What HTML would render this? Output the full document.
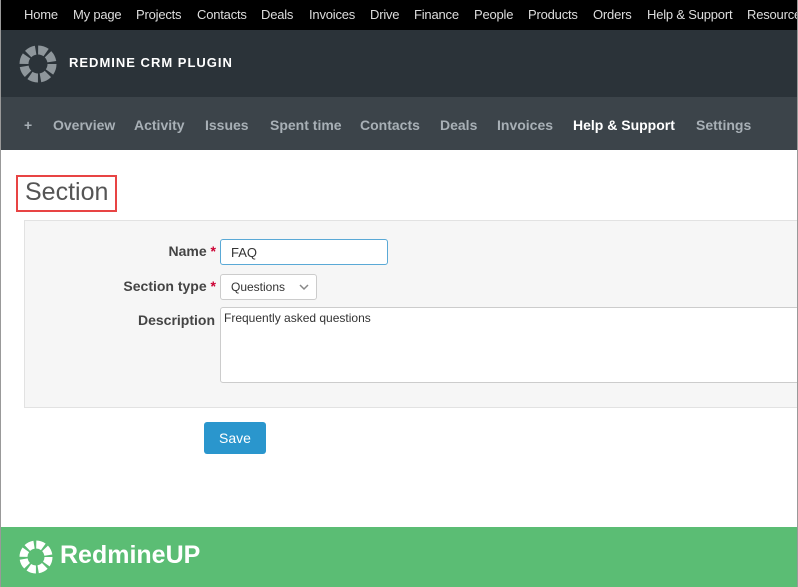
<!DOCTYPE html>
<html><head><meta charset="utf-8"><style>
*{margin:0;padding:0;box-sizing:border-box}
body{width:798px;height:587px;overflow:hidden;font-family:"Liberation Sans",Arial,sans-serif;background:#fff;position:relative}
#top{position:absolute;left:0;top:0;width:798px;height:30px;background:#000;color:#ddd;font-size:13px;white-space:nowrap;letter-spacing:-0.2px}
#top span{position:absolute;top:7px}
#hdr{position:absolute;left:0;top:30px;width:798px;height:67px;background:#2b3339}
#hdr .t{position:absolute;left:69px;top:25px;color:#fff;font-weight:bold;font-size:13px;letter-spacing:1px}
#nav{position:absolute;left:0;top:97px;width:798px;height:53px;background:#3c444a;color:#a8b0b6;font-weight:bold;font-size:14px;white-space:nowrap}
#nav span{position:absolute;top:20px}
h2{position:absolute;left:16px;top:175px;width:101px;height:37px;border:2px solid #e84444;font-weight:normal;font-size:25px;color:#555;padding:1px 0 0 7px}
#box{position:absolute;left:24px;top:220px;width:780px;height:188px;background:#f6f6f6;border:1px solid #e2e2e2}
.lbl{position:absolute;font-weight:bold;font-size:14px;color:#444;text-align:right;width:200px}
.lbl b{color:#c03}
.in{position:absolute;background:#fff;border:1px solid #ccc;border-radius:3px;font-size:13px;color:#333}
#save{position:absolute;left:204px;top:422px;width:62px;height:32px;background:#2a96cd;border-radius:3px;color:#fff;font-size:14px;text-align:center;line-height:32px}
#ft{position:absolute;left:0;top:527px;width:798px;height:60px;background:#5bbd74}
#ft .t{position:absolute;left:60px;top:14px;color:#fff;font-weight:bold;font-size:25px}
.bl{position:absolute;top:0;width:1px;height:587px;background:#999}
</style></head><body>
<div id="top">
<span style="left:24px">Home</span><span style="left:73px">My page</span><span style="left:136px">Projects</span><span style="left:197px">Contacts</span><span style="left:261px">Deals</span><span style="left:309px">Invoices</span><span style="left:370px">Drive</span><span style="left:414px">Finance</span><span style="left:474px">People</span><span style="left:528px">Products</span><span style="left:593px">Orders</span><span style="left:647px">Help &amp; Support</span><span style="left:747px">Resources</span>
</div>
<div id="hdr">
<svg style="position:absolute;left:18px;top:14px" width="40" height="40" viewBox="0 0 40 40"><circle cx="20" cy="20" r="14" fill="none" stroke="#8e969b" stroke-width="9" stroke-dasharray="8.5 2.5"/></svg>
<div class="t">REDMINE CRM PLUGIN</div>
</div>
<div id="nav">
<span style="left:24px">+</span><span style="left:53px">Overview</span><span style="left:134px">Activity</span><span style="left:205px">Issues</span><span style="left:270px">Spent time</span><span style="left:360px">Contacts</span><span style="left:440px">Deals</span><span style="left:497px">Invoices</span><span style="left:573px;color:#fff">Help &amp; Support</span><span style="left:696px">Settings</span>
</div>
<h2>Section</h2>
<div id="box"></div>
<div class="lbl" style="left:16px;top:243px">Name <b>*</b></div>
<div class="lbl" style="left:16px;top:278px">Section type <b>*</b></div>
<div class="lbl" style="left:15px;top:312px">Description</div>
<div class="in" style="left:220px;top:239px;width:168px;height:26px;border-color:#5aa9d6;padding:5px 0 0 10px">FAQ</div>
<div class="in" style="left:220px;top:274px;width:97px;height:26px;padding:5px 0 0 10px;font-size:12px">Questions<svg style="position:absolute;right:7px;top:9px" width="10" height="7" viewBox="0 0 10 7"><path d="M1 1l4 4 4-4" fill="none" stroke="#888" stroke-width="1.5"/></svg></div>
<div class="in" style="left:220px;top:307px;width:590px;height:76px;padding:3px 0 0 3px;font-size:12px">Frequently asked questions</div>
<div id="save">Save</div>
<div id="ft">
<svg style="position:absolute;left:18px;top:12px" width="36" height="36" viewBox="0 0 36 36"><circle cx="18" cy="18" r="12.5" fill="none" stroke="#fff" stroke-width="8" stroke-dasharray="7.5 2.3"/></svg>
<div class="t">RedmineUP</div>
</div>
<div class="bl" style="left:0"></div>
<div class="bl" style="left:797px"></div>
</body></html>
